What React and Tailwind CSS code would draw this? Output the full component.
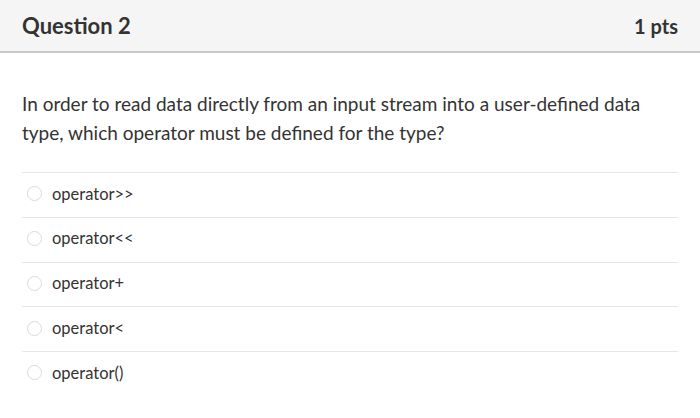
const answers = ['operator>>', 'operator<<', 'operator+', 'operator<', 'operator()'];

export default function App() {
  return (
    <div className="w-[700px] h-[418px] bg-white overflow-hidden" style={{ fontFamily: 'Lato, "Open Sans", sans-serif' }}>
      <div className="h-[53px] bg-[#f5f5f5] border-b-2 border-[#c8c8c8] flex items-center justify-between px-[22px]">
        <h2 className="text-[22px] font-bold text-[#333]">Question 2</h2>
        <span className="text-[20px] font-bold text-[#333]">1 pts</span>
      </div>

      <div className="px-[22px] pt-[36px]">
        <p className="text-[19px] leading-[29px] text-[#333]">
          In order to read data directly from an input stream into a user-defined data type, which operator must be defined for the type?
        </p>

        <div className="mt-[25px]">
          {answers.map((a) => (
            <div key={a} className="h-[44.75px] border-t border-[#e6e6e6] flex items-center gap-[10px] pl-[5px] pb-[2px]">
              <span className="w-[15px] h-[15px] rounded-full border border-[#dadada] bg-white shrink-0" />
              <span className="text-[16.5px] text-[#333]">{a}</span>
            </div>
          ))}
        </div>
      </div>
    </div>
  );
}
